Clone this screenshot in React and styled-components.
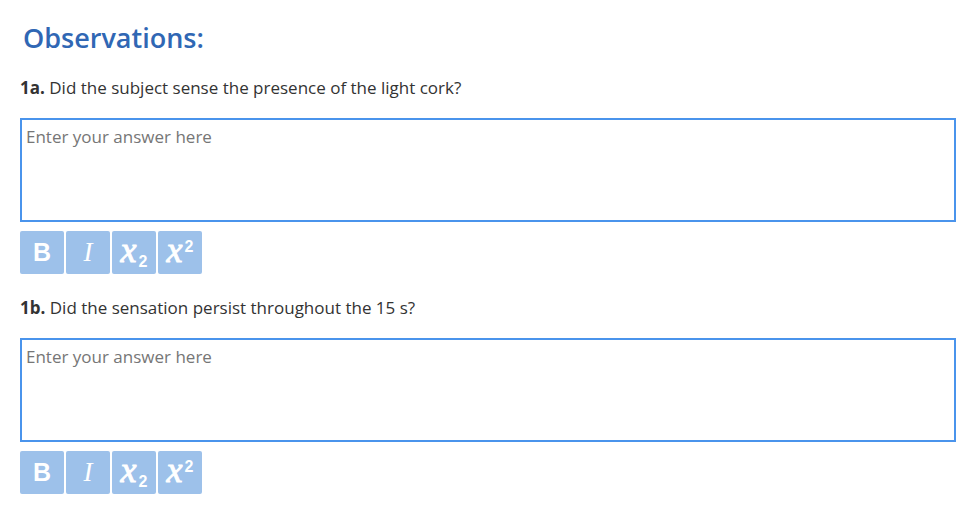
import React from 'react'
import styled, { createGlobalStyle } from 'styled-components'

const GlobalStyle = createGlobalStyle`
  body {
    margin: 0;
    background: #fff;
    font-family: "Open Sans", "Liberation Sans", sans-serif;
    color: #333;
  }
`

const Page = styled.div`
  padding: 20px 10px 0 20px;
`

const Heading = styled.h2`
  margin: 0 0 20px 3px;
  font-size: 27px;
  line-height: 36px;
  font-weight: 600;
  color: #3067b4;
`

const Question = styled.p`
  margin: 0 0 18px;
  font-size: 17px;
  line-height: 24px;
`

const Answer = styled.textarea`
  display: block;
  box-sizing: border-box;
  width: 100%;
  height: 104px;
  margin: 0;
  padding: 5px 4px;
  border: 2px solid #4a94ec;
  border-radius: 0;
  resize: none;
  outline: none;
  font-family: "Open Sans", "Liberation Sans", sans-serif;
  font-size: 17px;
  line-height: 24px;
  color: #333;

  &::placeholder {
    color: #767676;
  }
`

const Toolbar = styled.div`
  display: flex;
  gap: 2px;
  margin: 9px 0 22px;
`

const ToolButton = styled.button`
  display: flex;
  align-items: center;
  justify-content: center;
  width: 44px;
  height: 43px;
  padding: 0;
  border: none;
  border-radius: 2px;
  background: #9dc1ea;
  color: #fff;
  cursor: pointer;
  font-family: "Liberation Sans", Arial, sans-serif;
  font-size: 25px;
  font-weight: bold;
`

const Italic = styled.span`
  font-family: "Liberation Serif", "DejaVu Serif", serif;
  font-style: italic;
  font-weight: normal;
  font-size: ${({ math }) => (math ? '36px' : '27px')};
  line-height: 1;
  margin-top: ${({ math }) => (math ? '-6px' : '0')};
  -webkit-text-stroke: ${({ math }) => (math ? '1px #fff' : '0')};
`

const Script = styled.span`
  font-family: "Liberation Sans", Arial, sans-serif;
  font-weight: bold;
  font-size: 16px;
  line-height: 1;
  align-self: ${({ sup }) => (sup ? 'flex-start' : 'flex-end')};
  margin: ${({ sup }) => (sup ? '8px 0 0 2px' : '0 0 4px 2px')};
`

const Item = ({ label, text }) => (
  <>
    <Question>
      <strong>{label}</strong> {text}
    </Question>
    <Answer placeholder="Enter your answer here" />
    <Toolbar>
      <ToolButton>B</ToolButton>
      <ToolButton>
        <Italic>I</Italic>
      </ToolButton>
      <ToolButton>
        <Italic math>x</Italic>
        <Script>2</Script>
      </ToolButton>
      <ToolButton>
        <Italic math>x</Italic>
        <Script sup>2</Script>
      </ToolButton>
    </Toolbar>
  </>
)

export default function App() {
  return (
    <Page>
      <GlobalStyle />
      <Heading>Observations:</Heading>
      <Item label="1a." text="Did the subject sense the presence of the light cork?" />
      <Item label="1b." text="Did the sensation persist throughout the 15 s?" />
    </Page>
  )
}
